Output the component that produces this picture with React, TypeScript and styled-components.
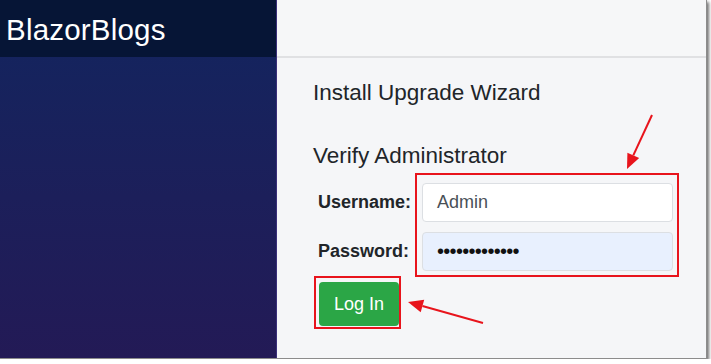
import React from 'react';
import styled, { createGlobalStyle } from 'styled-components';

const GlobalStyle = createGlobalStyle`
  html, body {
    margin: 0;
    padding: 0;
    background: #ffffff;
  }
  body {
    font-family: "Liberation Sans", Arial, sans-serif;
  }
`;

// The screenshot frame with its drop shadow
const Frame = styled.div`
  position: relative;
  display: flex;
  width: 706px;
  height: 358px;
  border-right: 1px solid #8c8c8c;
  border-bottom: 1px solid #8c8c8c;
  box-shadow: 2px 2px 3px rgba(0, 0, 0, 0.55);
  overflow: hidden;
`;

const Sidebar = styled.aside`
  width: 276px;
  display: flex;
  flex-direction: column;
  background-image: linear-gradient(180deg, #12255f 0%, #1c1f5a 55%, #231a56 100%);
  border-right: 1px solid #3a2f7a;
`;

const Brand = styled.div`
  height: 57px;
  display: flex;
  align-items: center;
  padding-left: 6px;
  padding-top: 2px;
  box-sizing: border-box;
  background: #061536;
  color: #ffffff;
  font-size: 29.5px;
  letter-spacing: 0.2px;
`;

const Main = styled.main`
  flex: 1;
  display: flex;
  flex-direction: column;
  background: #f5f6f8;
`;

const TopRow = styled.div`
  height: 56px;
  border-bottom: 2px solid #e0e1e3;
  background: #f6f7f8;
`;

const Content = styled.div`
  padding: 21px 0 0 36px;
  color: #212529;
`;

const Heading = styled.h3<{ $gap?: number }>`
  margin: 0 0 ${(p) => p.$gap ?? 0}px 0;
  font-size: 22.5px;
  font-weight: 400;
  line-height: 27px;
`;

const FormRow = styled.div`
  display: flex;
  align-items: flex-start;
  margin-top: 4px;
`;

const Labels = styled.div`
  display: flex;
  flex-direction: column;
  gap: 10px;
  padding: 10px 0 0 5px;
  width: 97px;
`;

const Label = styled.label`
  height: 39px;
  display: flex;
  align-items: center;
  font-size: 18px;
  font-weight: 700;
  color: #212529;
`;

// red annotation box drawn around the fields
const RedFrame = styled.div`
  display: flex;
  flex-direction: column;
  gap: 10px;
  width: 251px;
  padding: 8px 4px 4px 5px;
  border: 2px solid #e8141c;
`;

const Field = styled.div<{ $autofill?: boolean }>`
  height: 39px;
  box-sizing: border-box;
  display: flex;
  align-items: center;
  padding: 0 14px;
  border: 1px solid #dcdfe3;
  border-radius: 4px;
  background: ${(p) => (p.$autofill ? '#e8f0fe' : '#ffffff')};
  color: ${(p) => (p.$autofill ? '#111111' : '#495057')};
  font-size: ${(p) => (p.$autofill ? '20px' : '18px')};
  letter-spacing: ${(p) => (p.$autofill ? '-0.7px' : '0')};
`;

const ButtonFrame = styled.div`
  margin: -1px 0 0 1px;
  width: 87px;
  height: 53px;
  padding: 4px 4px 1px 3px;
  border: 2px solid #e8141c;
  box-sizing: border-box;
`;

const Button = styled.button`
  width: 80px;
  height: 44px;
  border: none;
  border-radius: 4px;
  background: #2ba646;
  color: #ffffff;
  font-family: "Liberation Sans", Arial, sans-serif;
  font-size: 18px;
  padding: 0;
`;

const Arrows = styled.svg`
  position: absolute;
  left: 0;
  top: 0;
  pointer-events: none;
`;

const Arrow: React.FC<{ x1: number; y1: number; x2: number; y2: number }> = ({ x1, y1, x2, y2 }) => {
  const ang = Math.atan2(y2 - y1, x2 - x1);
  const len = 15;
  const w = 6.5;
  const bx = x2 - Math.cos(ang) * len;
  const by = y2 - Math.sin(ang) * len;
  const px = -Math.sin(ang) * w;
  const py = Math.cos(ang) * w;
  return (
    <g>
      <line x1={x1} y1={y1} x2={bx} y2={by} stroke="#e8141c" strokeWidth={2} />
      <polygon points={`${x2},${y2} ${bx + px},${by + py} ${bx - px},${by - py}`} fill="#e8141c" />
    </g>
  );
};

const App: React.FC = () => {
  return (
    <>
      <GlobalStyle />
      <Frame>
        <Sidebar>
          <Brand>BlazorBlogs</Brand>
        </Sidebar>
        <Main>
          <TopRow />
          <Content>
            <Heading $gap={36}>Install Upgrade Wizard</Heading>
            <Heading>Verify Administrator</Heading>
            <FormRow>
              <Labels>
                <Label>Username:</Label>
                <Label>Password:</Label>
              </Labels>
              <RedFrame>
                <Field>Admin</Field>
                <Field $autofill>•••••••••••••</Field>
              </RedFrame>
            </FormRow>
            <ButtonFrame>
              <Button>Log In</Button>
            </ButtonFrame>
          </Content>
        </Main>
        <Arrows width={706} height={358}>
          <Arrow x1={652} y1={115} x2={627} y2={169} />
          <Arrow x1={483} y1={323} x2={408} y2={302} />
        </Arrows>
      </Frame>
    </>
  );
};

export default App;
